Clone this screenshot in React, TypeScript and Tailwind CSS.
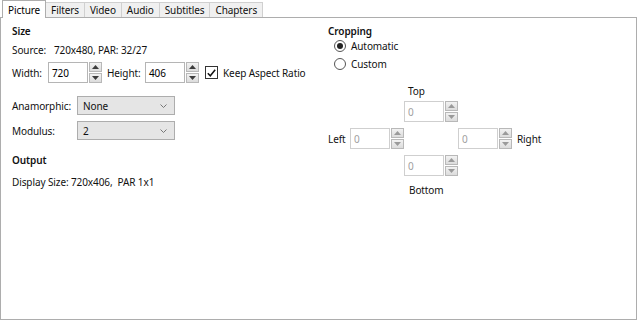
import React from "react";

const TABS = ["Picture", "Filters", "Video", "Audio", "Subtitles", "Chapters"];

function Arrow({ up, disabled }: { up?: boolean; disabled?: boolean }) {
  return (
    <svg width="7" height="4" viewBox="0 0 7 4" className="block">
      <path
        d={up ? "M0 4 L3.5 0 L7 4 Z" : "M0 0 L3.5 4 L7 0 Z"}
        fill={disabled ? "#9a9a9a" : "#3c3c3c"}
      />
    </svg>
  );
}

function Spin({ value, disabled }: { value: string; disabled?: boolean }) {
  return (
    <div className="flex h-[21px] w-[54px]">
      <div
        className={`flex h-full w-[40px] items-center border bg-white pl-[3px] ${
          disabled ? "border-[#cfcfcf] text-[#a0a0a0]" : "border-[#b5b5b5] text-black"
        }`}
      >
        {value}
      </div>
      <div className="ml-[1px] flex w-[13px] flex-col gap-[1px]">
        <div className="flex flex-1 items-center justify-center border border-[#b8b8b8] bg-gradient-to-b from-[#f2f2f2] to-[#dcdcdc]">
          <Arrow up disabled={disabled} />
        </div>
        <div className="flex flex-1 items-center justify-center border border-[#b8b8b8] bg-gradient-to-b from-[#f2f2f2] to-[#dcdcdc]">
          <Arrow disabled={disabled} />
        </div>
      </div>
    </div>
  );
}

function Combo({ value }: { value: string }) {
  return (
    <div className="flex h-[19px] w-[98px] items-center justify-between border border-[#adadad] bg-[#e5e5e5] pl-[5px] pr-[7px]">
      <span>{value}</span>
      <svg width="7" height="4" viewBox="0 0 7 4">
        <path d="M0.5 0.5 L3.5 3.5 L6.5 0.5" stroke="#777" fill="none" strokeWidth="1" />
      </svg>
    </div>
  );
}

function Radio({ checked, label }: { checked?: boolean; label: string }) {
  return (
    <div className="flex h-[18px] items-center pl-[6px]">
      <span className="flex h-[12px] w-[12px] items-center justify-center rounded-full border border-[#555] bg-white">
        {checked && <span className="h-[6px] w-[6px] rounded-full bg-[#222]" />}
      </span>
      <span className="ml-[5px]">{label}</span>
    </div>
  );
}

export default function App() {
  return (
    <div
      className="flex h-[320px] w-[637px] flex-col bg-white text-[10px] leading-[16px] tracking-[-0.1px] text-[#111]"
      style={{ fontFamily: '"Noto Sans", "Open Sans", sans-serif' }}
    >
      <div className="flex h-[17px] items-end pl-[2px]">
        {TABS.map((t, i) =>
          i === 0 ? (
            <div
              key={t}
              className="relative -mb-[1px] flex h-[18px] items-center border border-b-0 border-[#adadad] bg-white px-[5px] text-black"
            >
              {t}
            </div>
          ) : (
            <div
              key={t}
              className="flex h-[15px] items-center border border-l-0 border-b-0 border-[#d0d0d0] bg-[#f0f0f0] px-[5px]"
            >
              {t}
            </div>
          )
        )}
      </div>
      <div className="flex flex-1 border border-[#adadad]">
        <div className="w-[316px] pl-[11px] pt-[5px]">
          <div className="h-[16px] font-semibold">Size</div>
          <div className="mt-[3px] flex h-[16px]">
            <span className="w-[42px]">Source:</span>
            <span>720x480, PAR: 32/27</span>
          </div>
          <div className="mt-[4px] flex h-[21px] items-center">
            <span className="w-[36px]">Width:</span>
            <Spin value="720" />
            <span className="ml-[5px] w-[38px]">Height:</span>
            <Spin value="406" />
            <span className="ml-[6px] flex h-[13px] w-[13px] items-center justify-center border border-[#333] bg-white">
              <svg width="9" height="8" viewBox="0 0 9 8">
                <path d="M0.8 4.2 L3.3 6.8 L8.2 0.8" stroke="#111" strokeWidth="1.5" fill="none" />
              </svg>
            </span>
            <span className="ml-[5px]">Keep Aspect Ratio</span>
          </div>
          <div className="mt-[13px] flex h-[19px] items-center">
            <span className="w-[65px]">Anamorphic:</span>
            <Combo value="None" />
          </div>
          <div className="mt-[6px] flex h-[19px] items-center">
            <span className="w-[65px]">Modulus:</span>
            <Combo value="2" />
          </div>
          <div className="mt-[12px] h-[16px] font-semibold">Output</div>
          <div className="mt-[6px] h-[16px] whitespace-pre">Display Size: 720x406,  PAR 1x1</div>
        </div>
        <div className="pl-[11px] pt-[5px]">
          <div className="h-[14px] font-semibold">Cropping</div>
          <Radio checked label="Automatic" />
          <Radio label="Custom" />
          <div className="mt-[10px] h-[16px] pl-[80px]">Top</div>
          <div className="mt-[2px] grid grid-cols-[22px_54px_54px_54px_auto] grid-rows-[21px_21px_21px] gap-y-[6px]">
            <div className="col-start-3 row-start-1">
              <Spin value="0" disabled />
            </div>
            <div className="col-start-1 row-start-2 flex items-center">Left</div>
            <div className="col-start-2 row-start-2">
              <Spin value="0" disabled />
            </div>
            <div className="col-start-4 row-start-2">
              <Spin value="0" disabled />
            </div>
            <div className="col-start-5 row-start-2 flex items-center pl-[5px]">Right</div>
            <div className="col-start-3 row-start-3">
              <Spin value="0" disabled />
            </div>
          </div>
          <div className="mt-[6px] h-[16px] pl-[81px]">Bottom</div>
        </div>
      </div>
    </div>
  );
}
